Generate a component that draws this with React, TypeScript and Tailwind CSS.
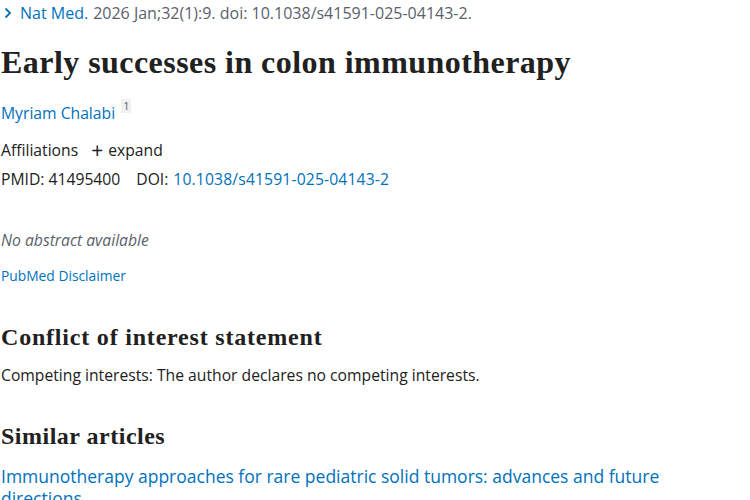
import React from "react";

const sans = { fontFamily: '"Open Sans", "Noto Sans", sans-serif' };
const serif = { fontFamily: '"Liberation Serif", "DejaVu Serif", serif' };

export default function App() {
  return (
    <div className="w-[750px] h-[500px] overflow-hidden bg-white pl-[1px]" style={sans}>
      <div className="flex items-center h-[26px] text-[16px] text-[#5b616b]">
        <svg width="10" height="12" viewBox="0 0 10 12" className="ml-[2px] mr-[7px]">
          <path d="M2.5 1.5 L7 6 L2.5 10.5" stroke="#0071bc" strokeWidth="1.8" fill="none" />
        </svg>
        <span className="text-[#0071bc]">Nat Med.</span>
        <span className="ml-[5px]">2026 Jan;32(1):9. doi: 10.1038/s41591-025-04143-2.</span>
      </div>
      <h1 className="mt-[17px] text-[32px] leading-[38px] tracking-[0.45px] font-bold text-[#212121]" style={serif}>
        Early successes in colon immunotherapy
      </h1>
      <div className="mt-[20px] flex items-start text-[15.7px] leading-[24px]">
        <span className="text-[#0071bc]">Myriam Chalabi</span>
        <span className="ml-[6px] mt-[-2px] text-[11px] leading-[14px] px-[2px] bg-[#f0f0f0] text-[#5b616b]">1</span>
      </div>
      <div className="mt-[13px] flex items-center text-[15.7px] leading-[24px] text-[#212121]">
        <span>Affiliations</span>
        <span className="ml-[13px] text-[21px] leading-[20px] mr-[5px]">+</span>
        <span>expand</span>
      </div>
      <div className="mt-[5px] flex items-center text-[15.7px] leading-[24px] text-[#212121]">
        <span>PMID: 41495400</span>
        <span className="ml-[16px]">DOI:</span>
        <span className="ml-[5px] text-[#0071bc] tracking-[0.15px]">10.1038/s41591-025-04143-2</span>
      </div>
      <div className="mt-[37px] text-[15.7px] leading-[24px] italic text-[#5b616b]">No abstract available</div>
      <div className="mt-[14px] text-[13.8px] leading-[20px] text-[#0071bc]">PubMed Disclaimer</div>
      <h2 className="mt-[36px] text-[24px] leading-[30px] tracking-[0.8px] font-bold text-[#212121]" style={serif}>
        Conflict of interest statement
      </h2>
      <div className="mt-[11px] text-[15.7px] leading-[24px] text-[#212121]">
        Competing interests: The author declares no competing interests.
      </div>
      <h2 className="mt-[34px] text-[24px] leading-[30px] tracking-[0.5px] font-bold text-[#212121]" style={serif}>
        Similar articles
      </h2>
      <div className="mt-[14px] text-[17.5px] leading-[22px] text-[#0071bc] w-[680px]">
        Immunotherapy approaches for rare pediatric solid tumors: advances and future directions
      </div>
    </div>
  );
}
